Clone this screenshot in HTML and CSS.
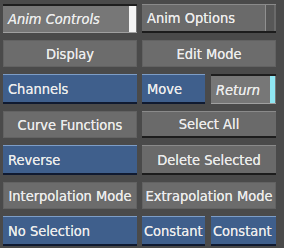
FILE: index.html
```html
<!DOCTYPE html>
<html lang="en">
<head>
    <meta charset="UTF-8">
    <title>Anim Controls</title>
    <link rel="stylesheet" href="styles.css">
</head>
<body>
    <div class="panel">
        <div class="row row-top">
            <div class="btn sunken italic">Anim Controls<span class="ind ind-white"></span></div>
            <div class="btn raised">Anim Options<span class="ind ind-drop"></span></div>
        </div>

        <div class="row row-label">
            <div class="label">Display</div>
            <div class="label">Edit Mode</div>
        </div>

        <div class="row row-blue">
            <div class="btn blue">Channels</div>
            <div class="split">
                <div class="btn blue">Move</div>
                <div class="btn sunken italic">Return<span class="ind ind-cyan"></span></div>
            </div>
        </div>

        <div class="row row-label">
            <div class="label">Curve Functions</div>
            <div class="btn raised center">Select All</div>
        </div>

        <div class="row row-blue">
            <div class="btn blue">Reverse</div>
            <div class="btn raised center">Delete Selected</div>
        </div>

        <div class="row row-label">
            <div class="label">Interpolation Mode</div>
            <div class="label">Extrapolation Mode</div>
        </div>

        <div class="row row-blue">
            <div class="btn blue">No Selection</div>
            <div class="split">
                <div class="btn blue tight">Constant</div>
                <div class="btn blue tight">Constant</div>
            </div>
        </div>
    </div>
</body>
</html>
```

FILE: styles.css
```css
body {
    margin: 0;
    background-color: #4a4a4a;
    font-family: "DejaVu Sans Condensed", "DejaVu Sans", sans-serif;
    font-size: 14.5px;
    color: #ececec;
}
.panel {
    display: flex;
    flex-direction: column;
    gap: 7px;
    padding: 4px 0 0 3px;
}
.row {
    display: grid;
    grid-template-columns: 134px 134px;
    column-gap: 5px;
}
.row-top {
    height: 29px;
}
.row-label {
    height: 27px;
}
.row-blue {
    height: 30px;
}
.split {
    display: grid;
    grid-template-columns: 63px 65px;
    column-gap: 6px;
}
.btn, .label {
    position: relative;
    box-sizing: border-box;
    display: flex;
    align-items: center;
    padding-left: 5px;
    white-space: nowrap;
    overflow: hidden;
    text-shadow: 0 0 0.5px #ececec;
}
.label {
    justify-content: center;
    padding-left: 0;
    background-color: #6c6c6c;
    border: 1px solid #626262;
}
.center {
    justify-content: center;
    padding-left: 0;
}
.tight {
    padding-left: 2px;
}
.italic {
    font-style: italic;
}
.raised {
    background-color: #6a6a6a;
    border-top: 1px solid #8a8a8a;
    border-bottom: 2px solid #1c1c1c;
}
.sunken {
    background-color: #777777;
    border-top: 2px solid #1e1e1e;
    border-bottom: 1px solid #a0a0a0;
}
.blue {
    background-color: #3f5f8c;
    border-top: 1px solid #7d9dc6;
    border-bottom: 2px solid #101a30;
}
.ind {
    position: absolute;
    top: 0;
    bottom: 0;
}
.ind-white {
    right: 1px;
    width: 7px;
    background-color: #f4f4f4;
}
.ind-drop {
    right: 2px;
    width: 8px;
    background-color: #575757;
    border-left: 1px solid #909090;
}
.ind-cyan {
    right: 1px;
    width: 5px;
    background-color: #8fe6f2;
}
```
